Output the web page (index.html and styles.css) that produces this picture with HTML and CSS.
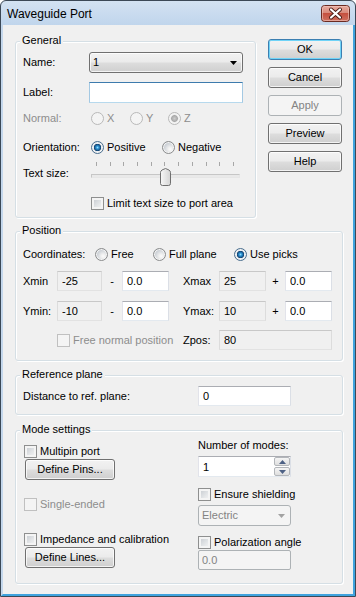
FILE: index.html
```html
<!DOCTYPE html>
<html lang="en">
<head>
<meta charset="utf-8">
<title>Waveguide Port</title>
<link rel="stylesheet" href="styles.css">
</head>
<body>
<div class="window">
  <div class="titlebar">
    <span class="title">Waveguide Port</span>
    <span class="close-btn">
      <svg width="29" height="17" viewBox="0 0 29 17">
        <defs>
          <linearGradient id="cg" x1="0" y1="0" x2="0" y2="1">
            <stop offset="0" stop-color="#e9ada2"/>
            <stop offset="0.45" stop-color="#d98a7b"/>
            <stop offset="0.5" stop-color="#c5503f"/>
            <stop offset="1" stop-color="#d07262"/>
          </linearGradient>
        </defs>
        <rect x="0.5" y="0.5" width="28" height="16" rx="3" fill="url(#cg)" stroke="#6b2b22"/>
        <rect x="1.5" y="1.5" width="26" height="14" rx="2" fill="none" stroke="#f2c8bf" stroke-opacity="0.6"/>
        <path d="M10 4.5L19 12.5M19 4.5L10 12.5" stroke="#4a1d17" stroke-width="4" stroke-linecap="round"/>
        <path d="M10 4.5L19 12.5M19 4.5L10 12.5" stroke="#ffffff" stroke-width="2.2" stroke-linecap="round"/>
      </svg>
    </span>
  </div>
  <div class="frame">
    <div class="client">
      <div class="top-row">
        <div class="group general">
          <span class="legend">General</span>
          <div class="row row-name">
            <span class="lbl lbl-gen">Name:</span>
            <div class="combo combo-name">
              <span class="combo-text">1</span>
              <svg class="combo-arrow" width="7" height="4" viewBox="0 0 7 4"><path d="M0 0H7L3.5 4Z" fill="#000"/></svg>
            </div>
          </div>
          <div class="row row-label">
            <span class="lbl lbl-gen">Label:</span>
            <input class="edit focus edit-label" type="text" value="">
          </div>
          <div class="row row-radio disabled">
            <span class="lbl lbl-gen">Normal:</span>
            <label class="opt opt-x"><input type="radio" class="rb" name="normal" disabled><span>X</span></label>
            <label class="opt opt-y"><input type="radio" class="rb" name="normal" disabled><span>Y</span></label>
            <label class="opt"><input type="radio" class="rb" name="normal" disabled checked><span>Z</span></label>
          </div>
          <div class="row row-radio row-orient">
            <span class="lbl lbl-gen">Orientation:</span>
            <label class="opt opt-pos"><input type="radio" class="rb" name="orient" checked><span>Positive</span></label>
            <label class="opt"><input type="radio" class="rb" name="orient"><span>Negative</span></label>
          </div>
          <div class="row row-slider">
            <span class="lbl lbl-gen lbl-textsize">Text size:</span>
            <div class="slider">
              <div class="ticks">
                <i></i><i></i><i></i><i></i><i></i><i></i><i></i><i></i><i></i><i></i><i></i>
              </div>
              <div class="track"></div>
              <svg class="thumb" width="11" height="18" viewBox="0 0 11 18">
                <defs>
                  <linearGradient id="tg" x1="0" y1="0" x2="1" y2="0">
                    <stop offset="0" stop-color="#f7f7f7"/>
                    <stop offset="1" stop-color="#d4d4d4"/>
                  </linearGradient>
                </defs>
                <path d="M0.5 4.5Q0.5 3 2 2L5.5 0.5L9 2Q10.5 3 10.5 4.5V15.5Q10.5 17.5 8.5 17.5H2.5Q0.5 17.5 0.5 15.5Z" fill="url(#tg)" stroke="#6f6f6f"/>
              </svg>
            </div>
          </div>
          <div class="row row-check">
            <label class="opt"><input type="checkbox" class="cb"><span>Limit text size to port area</span></label>
          </div>
        </div>
        <div class="buttons">
          <button class="btn btn-default">OK</button>
          <button class="btn">Cancel</button>
          <button class="btn" disabled>Apply</button>
          <button class="btn">Preview</button>
          <button class="btn">Help</button>
        </div>
      </div>

      <div class="group position">
        <span class="legend">Position</span>
        <div class="row row-coord">
          <span class="lbl lbl-coord">Coordinates:</span>
          <label class="opt opt-free"><input type="radio" class="rb" name="coord"><span>Free</span></label>
          <label class="opt opt-full"><input type="radio" class="rb" name="coord"><span>Full plane</span></label>
          <label class="opt"><input type="radio" class="rb" name="coord" checked><span>Use picks</span></label>
        </div>
        <div class="row row-range row-xmin">
          <span class="lbl lbl-min">Xmin</span>
          <input class="edit readonly w45" type="text" value="-25" readonly>
          <span class="op">-</span>
          <input class="edit w47" type="text" value="0.0">
          <span class="lbl lbl-max">Xmax</span>
          <input class="edit readonly w47" type="text" value="25" readonly>
          <span class="op op-plus">+</span>
          <input class="edit w47" type="text" value="0.0">
        </div>
        <div class="row row-range row-ymin">
          <span class="lbl lbl-min">Ymin:</span>
          <input class="edit readonly w45" type="text" value="-10" readonly>
          <span class="op">-</span>
          <input class="edit w47" type="text" value="0.0">
          <span class="lbl lbl-max">Ymax:</span>
          <input class="edit readonly w47" type="text" value="10" readonly>
          <span class="op op-plus">+</span>
          <input class="edit w47" type="text" value="0.0">
        </div>
        <div class="row row-range row-zpos">
          <span class="lbl lbl-min"></span>
          <label class="opt opt-freenormal disabled"><input type="checkbox" class="cb" disabled><span>Free normal position</span></label>
          <span class="lbl lbl-max">Zpos:</span>
          <input class="edit readonly w113" type="text" value="80" readonly>
        </div>
      </div>

      <div class="group reference">
        <span class="legend">Reference plane</span>
        <div class="row row-ref">
          <span class="lbl lbl-ref">Distance to ref. plane:</span>
          <input class="edit w93" type="text" value="0">
        </div>
      </div>

      <div class="group mode">
        <span class="legend">Mode settings</span>
        <div class="mode-cols">
          <div class="mcol mcol-left">
            <label class="opt cbrow multipin"><input type="checkbox" class="cb"><span>Multipin port</span></label>
            <button class="btn btn-define pins">Define Pins...</button>
            <label class="opt cbrow single disabled"><input type="checkbox" class="cb" disabled><span>Single-ended</span></label>
            <label class="opt cbrow impedance"><input type="checkbox" class="cb"><span>Impedance and calibration</span></label>
            <button class="btn btn-define lines">Define Lines...</button>
          </div>
          <div class="mcol mcol-right">
            <span class="modes-lbl">Number of modes:</span>
            <div class="spin">
              <input class="spin-edit" type="text" value="1">
              <div class="spin-btns">
                <span class="spin-btn"><svg width="7" height="4" viewBox="0 0 7 4"><path d="M0 4L3.5 0L7 4Z" fill="#4d6185"/></svg></span>
                <span class="spin-btn"><svg width="7" height="4" viewBox="0 0 7 4"><path d="M0 0H7L3.5 4Z" fill="#4d6185"/></svg></span>
              </div>
            </div>
            <label class="opt cbrow shielding"><input type="checkbox" class="cb"><span>Ensure shielding</span></label>
            <div class="combo combo-disabled electric">
              <span class="combo-text">Electric</span>
              <svg class="combo-arrow" width="7" height="4" viewBox="0 0 7 4"><path d="M0 0H7L3.5 4Z" fill="#a2a2a2"/></svg>
            </div>
            <label class="opt cbrow polarization"><input type="checkbox" class="cb"><span>Polarization angle</span></label>
            <input class="edit edit-disabled w93 angle" type="text" value="0.0" disabled>
          </div>
        </div>
      </div>
    </div>
  </div>
</div>
</body>
</html>
```

FILE: styles.css
```css
* { box-sizing: border-box; }

html, body { margin: 0; padding: 0; }

body {
  width: 356px;
  height: 597px;
  overflow: hidden;
  background: #ffffff;
  font-family: "Liberation Sans", Arial, sans-serif;
  font-size: 11px;
  line-height: 13px;
  color: #000;
}

/* ---------- window chrome ---------- */
.window {
  width: 356px;
  height: 597px;
  display: flex;
  flex-direction: column;
  border: 1px solid #3b4856;
  border-radius: 6px 6px 0 0;
  background: linear-gradient(#d3e2f2 0px, #c0d5ec 24px);
  overflow: hidden;
}

.titlebar {
  flex: none;
  height: 24px;
  display: flex;
  align-items: flex-start;
  padding-left: 6px;
}

.title {
  flex: 1;
  font-size: 12px;
  line-height: 14px;
  margin-top: 6px;
  color: #000;
}

.close-btn {
  width: 29px;
  height: 17px;
  margin-top: 4px;
  margin-right: 5px;
  display: block;
}
.close-btn svg { display: block; }

.frame {
  flex: 1;
  display: flex;
  border-left: 2px solid #c4d7ec;
  border-right: 2px solid #3fa3de;
  border-bottom: 2px solid #3fa3de;
}

.client {
  flex: 1;
  background: #f0f0f0;
  padding: 14px 10px 0 12px;
}

/* ---------- group boxes ---------- */
.group {
  position: relative;
  border: 1px solid #d5dfe5;
  border-radius: 3px;
  box-shadow: inset 1px 1px 0 #ffffff, 1px 1px 0 #ffffff;
}

.legend {
  position: absolute;
  top: -8px;
  left: 4px;
  padding: 0 2px;
  background: #f0f0f0;
  line-height: 13px;
  white-space: nowrap;
}

.top-row {
  display: flex;
  align-items: flex-start;
}

.general {
  width: 241px;
  height: 177px;
  margin-top: 2px;
  padding: 10px 0 0 7px;
}

.buttons {
  width: 74px;
  margin-left: 12px;
  display: flex;
  flex-direction: column;
  gap: 7px;
}

.position {
  height: 130px;
  margin-top: 13px;
  padding: 12px 0 0 7px;
}

.reference {
  height: 40px;
  margin-top: 14px;
  padding: 10px 0 0 7px;
}

.mode {
  height: 154px;
  margin-top: 15px;
  padding: 8px 0 0 8px;
}

/* ---------- rows ---------- */
.row {
  display: flex;
  align-items: center;
  white-space: nowrap;
}

.lbl { flex: none; }
.lbl-gen { width: 66px; }

.row-name { height: 21px; }
.row-label { height: 21px; margin-top: 9px; }
.row-radio { height: 20px; margin-top: 5px; }
.row-orient { margin-top: 9px; }
.row-radio .opt:first-of-type { margin-left: 2px; }

.row-slider {
  height: 31px;
  align-items: flex-start;
}
.lbl-textsize { padding-top: 10px; }

.row-check {
  height: 15px;
  margin-top: 8px;
  padding-left: 68px;
}

.disabled, .disabled .lbl { color: #8d8d8d; }

.opt {
  display: flex;
  align-items: center;
  gap: 3px;
  flex: none;
  white-space: nowrap;
}
.opt-x { width: 39px; }
.opt-y { width: 38px; }
.opt-pos { width: 71px; }

/* ---------- position ---------- */
.row-coord { height: 20px; }
.lbl-coord { width: 72px; }
.opt-free { width: 58px; }
.opt-full { width: 81px; }

.row-range { height: 20px; }
.row-xmin { margin-top: 7px; }
.row-ymin { margin-top: 10px; }
.row-zpos { margin-top: 9px; }
.lbl-min { width: 34px; }
.lbl-max { width: 36px; }
.op { width: 20px; text-align: center; flex: none; }
.op-plus { width: 19px; }
.row-range .op + .edit + .lbl-max { margin-left: 14px; }
.opt-freenormal { width: 126px; }

/* ---------- reference ---------- */
.row-ref { height: 20px; }
.lbl-ref { width: 175px; }

/* ---------- mode settings ---------- */
.mode-cols { display: flex; }
.mcol { display: flex; flex-direction: column; align-items: flex-start; }
.mcol-left { width: 174px; padding-top: 5px; }
.mcol-right { width: 93px; }

.cbrow { height: 15px; }
.btn.btn-define { width: 90px; margin-left: 1px; }
.pins { margin-top: 4px; }
.single { margin-top: 17px; }
.impedance { margin-top: 20px; }
.lines { margin-top: 3px; }

.modes-lbl { line-height: 13px; white-space: nowrap; }
.spin { margin-top: 4px; }
.shielding { margin-top: 10px; }
.electric { margin-top: 3px; width: 93px; }
.polarization { margin-top: 9px; }
.angle { margin-top: 2px; height: 21px; }

/* ---------- controls ---------- */
.btn {
  display: block;
  width: 74px;
  height: 21px;
  margin: 0;
  padding: 0;
  border: 1px solid #707070;
  border-radius: 3px;
  background: linear-gradient(#f2f2f2 0%, #ebebeb 48%, #dddddd 52%, #cfcfcf 100%);
  box-shadow: inset 0 0 0 1px rgba(255, 255, 255, 0.75);
  font-family: inherit;
  font-size: 11px;
  line-height: 13px;
  color: #000;
  text-align: center;
  white-space: nowrap;
}
.btn-default {
  border-color: #3c7fb1;
  box-shadow: inset 0 0 0 1px #6fd3f7;
}
.btn:disabled {
  border-color: #adb2b5;
  background: #f4f4f4;
  box-shadow: none;
  color: #838383;
}

.combo {
  display: flex;
  align-items: center;
  height: 21px;
  border: 1px solid #707070;
  border-radius: 3px;
  background: linear-gradient(#f2f2f2 0%, #ebebeb 48%, #dddddd 52%, #cfcfcf 100%);
  box-shadow: inset 0 0 0 1px rgba(255, 255, 255, 0.75);
  padding: 0 5px 0 3px;
}
.combo-name { width: 154px; }
.combo-text { flex: 1; }
.combo-arrow { display: block; flex: none; }
.combo-disabled {
  border-color: #adb2b5;
  background: #f4f4f4;
  box-shadow: none;
  color: #838383;
}

.edit {
  display: block;
  flex: none;
  height: 20px;
  margin: 0;
  padding: 0 0 0 4px;
  border: 1px solid;
  border-color: #abadb3 #dbdfe6 #e3e9ef #e2e3ea;
  border-radius: 0;
  background: #ffffff;
  font-family: inherit;
  font-size: 11px;
  color: #000;
  outline: none;
}
.edit.focus { border-color: #3d7bad #a4c9e3 #b7d9ed #a4c9e3; }
.edit.readonly { background: #f0f0f0; border-color: #c8c8c8 #dcdcdc #e2e2e2 #dcdcdc; }
.edit-disabled {
  background: #f4f4f4;
  border-color: #adb2b5;
  border-radius: 2px;
  color: #838383;
  padding-left: 3px;
}
.edit-label { width: 154px; height: 21px; }
.w45 { width: 45px; }
.w47 { width: 47px; }
.w93 { width: 93px; }
.w113 { width: 113px; }

.rb {
  -webkit-appearance: none;
  appearance: none;
  flex: none;
  margin: 0;
  width: 13px;
  height: 13px;
  border-radius: 50%;
  border: 1px solid #8b8c8d;
  background: radial-gradient(circle at 65% 65%, #fbfbfb 0, #f0f0f0 2px, #c9ced4 6.5px);
  box-shadow: inset 0 0 0 1px #f4f4f4;
}
.rb:checked {
  border-color: #4b6f8f;
  background: radial-gradient(circle at 50% 50%, #8fe0ff 0, #2b8fcf 1.5px, #1b5c92 2.8px, #123e68 3.4px, #e9eef3 4px, #cdd3da 5.5px);
}
.rb:disabled {
  border-color: #b9b9b9;
  background: #f4f4f4;
  box-shadow: none;
}
.rb:disabled:checked {
  background: radial-gradient(circle at 50% 50%, #cdcdcd 0, #a9a9a9 3px, #dcdcdc 3.6px, #f4f4f4 4.2px);
}

.cb {
  -webkit-appearance: none;
  appearance: none;
  flex: none;
  margin: 0;
  width: 13px;
  height: 13px;
  border: 1px solid #8e8f8f;
  border-radius: 0;
  background: linear-gradient(135deg, #c2c7cd 0%, #e4e6e8 60%, #f6f6f6 100%);
  box-shadow: inset 0 0 0 2px #f4f4f4;
}
.cb:disabled {
  border-color: #c0c0c0;
  background: #f4f4f4;
  box-shadow: none;
}

/* slider */
.slider {
  position: relative;
  width: 149px;
  height: 31px;
  margin-left: 2px;
}
.ticks {
  display: flex;
  justify-content: space-between;
  height: 4px;
  margin-top: 5px;
  padding: 0 6px 0 5px;
}
.ticks i {
  display: block;
  width: 1px;
  height: 4px;
  background: #a7a7a7;
}
.track {
  height: 4px;
  margin-top: 8px;
  border: 1px solid #c6c6c6;
  border-bottom-color: #e6e6e6;
  border-right-color: #e6e6e6;
  background: #e9e9e9;
}
.thumb {
  position: absolute;
  left: 69px;
  top: 11px;
  display: block;
}

/* spin box */
.spin {
  display: flex;
  width: 93px;
  height: 21px;
  border: 1px solid;
  border-color: #abadb3 #dbdfe6 #e3e9ef #e2e3ea;
  background: #fff;
}
.spin-edit {
  flex: 1;
  min-width: 0;
  border: 0;
  margin: 0;
  padding: 0 0 0 4px;
  font-family: inherit;
  font-size: 11px;
  background: transparent;
  outline: none;
}
.spin-btns {
  width: 16px;
  display: flex;
  flex-direction: column;
  gap: 1px;
}
.spin-btn {
  flex: 1;
  display: flex;
  align-items: center;
  justify-content: center;
  border: 1px solid #b3b6ba;
  border-radius: 2px;
  background: linear-gradient(#f5f5f5, #dedede);
}
.spin-btn svg { display: block; }
```
